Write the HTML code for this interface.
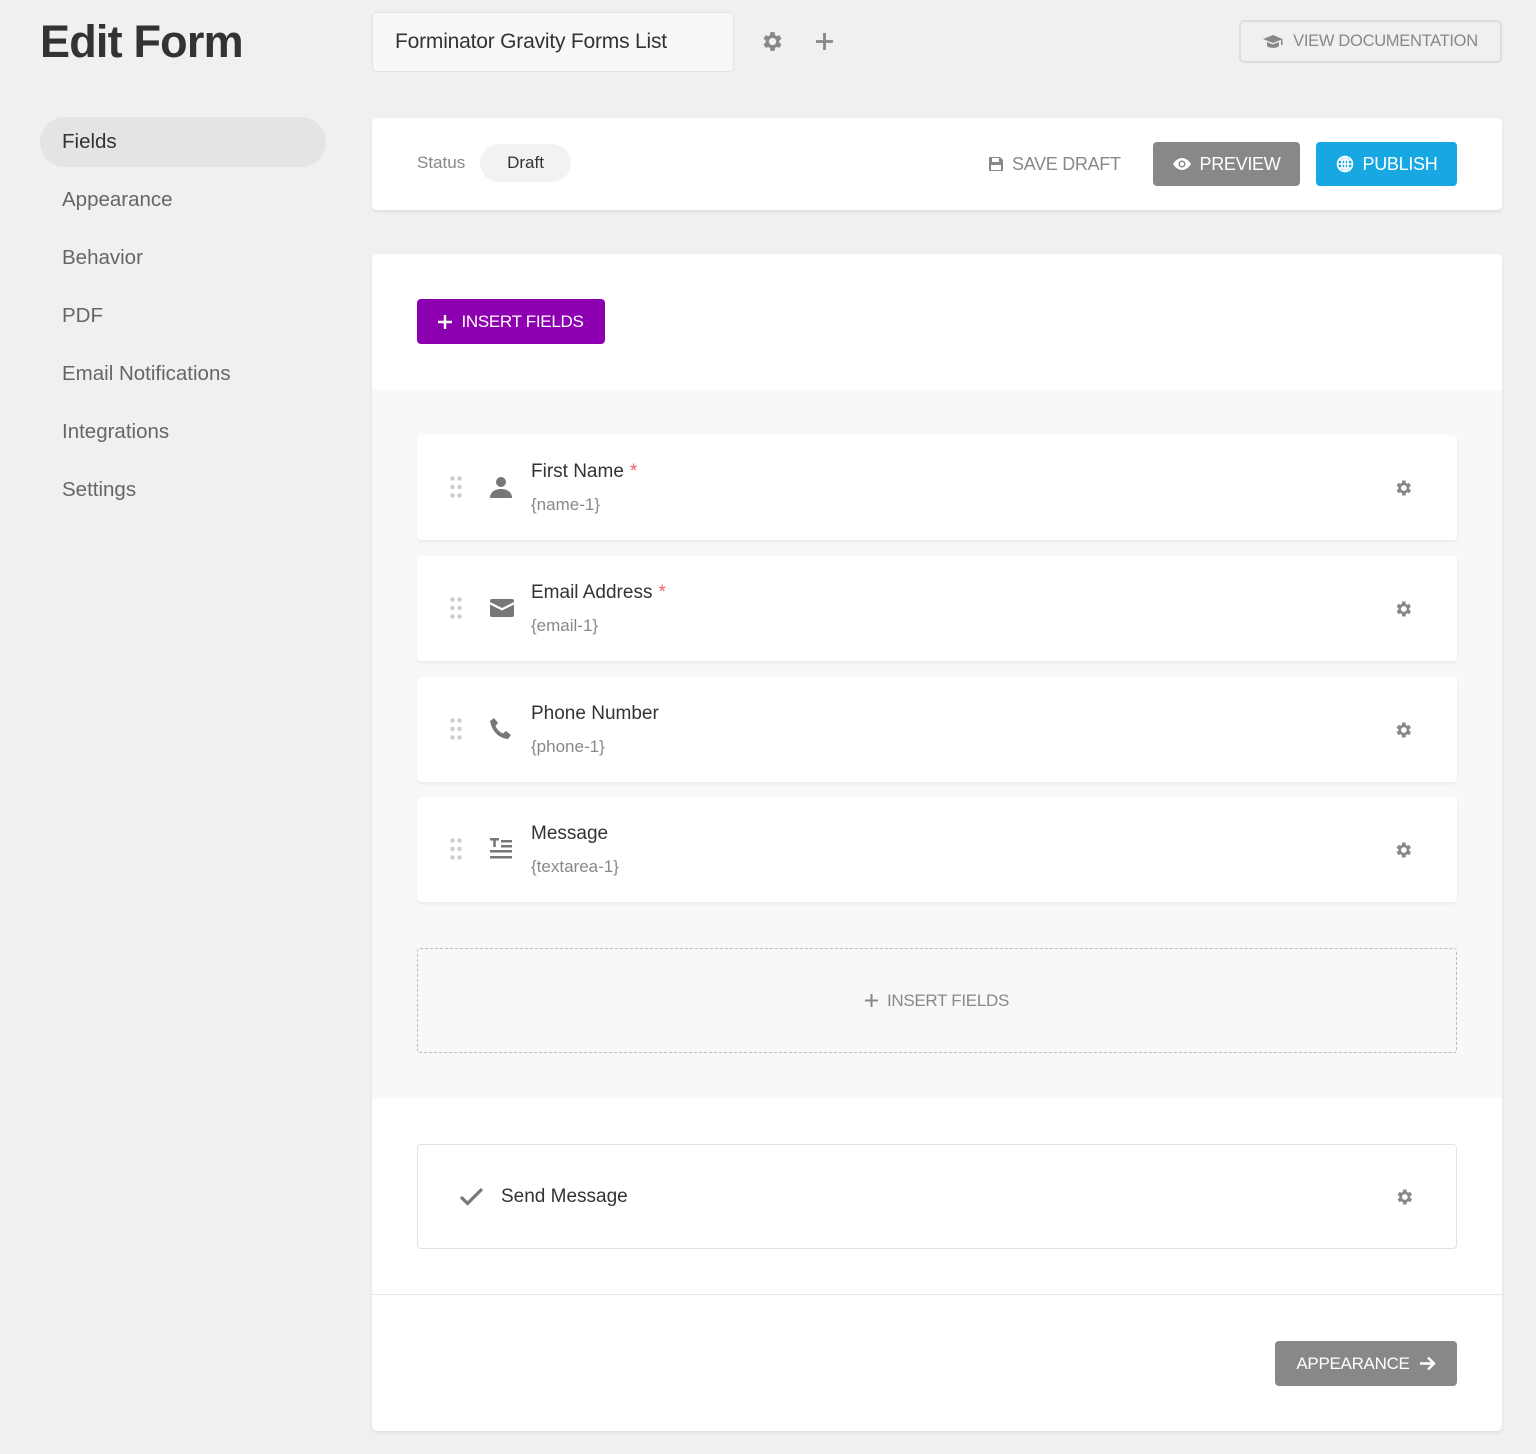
<!DOCTYPE html>
<html><head><meta charset="utf-8"><style>
*{box-sizing:border-box;margin:0;padding:0}
body{width:1536px;height:1454px;background:#f0f0f0;font-family:"Liberation Sans",Arial,sans-serif;position:relative;overflow:hidden;color:#333}
.a{position:absolute}
.h1{left:40px;top:16px;font-size:45px;font-weight:bold;color:#333;letter-spacing:-0.8px}
.title{left:372px;top:12px;width:362px;height:60px;background:#f8f8f8;border:1px solid #e2e2e2;border-radius:5px;font-size:21px;padding:17px 22px;color:#333;letter-spacing:-0.2px}
.doc{left:1239px;top:20px;width:263px;height:43px;border:2px solid #ddd;border-radius:5px;color:#888;font-size:16.5px;display:flex;align-items:center;justify-content:center;gap:10px;letter-spacing:-0.3px}
.nav{left:62px;font-size:20.5px;color:#666}
.pill{left:40px;top:117px;width:286px;height:50px;background:#e4e4e4;border-radius:25px}
.card{background:#fff;border-radius:5px;box-shadow:0 2px 3px rgba(0,0,0,.07)}
.btn{display:flex;align-items:center;justify-content:center;gap:9px;border-radius:4px;color:#fff;font-size:17px;letter-spacing:-0.3px}
.row{left:417px;width:1040px;height:105px;background:#fff;border-radius:4px;box-shadow:0 2px 3px rgba(0,0,0,.06)}
.row .l{position:absolute;left:114px;top:26px;font-size:19px;color:#333}
.row .l b{color:#e66;font-weight:normal;margin-left:6px}
.row .s{position:absolute;left:114px;top:60px;font-size:17px;color:#888}
.row .dr{position:absolute;left:33px;top:41px}
.row .ic{position:absolute;left:72px;top:40px}
.row .g{position:absolute;left:976px;top:43px}
</style></head><body>
<div class="a h1">Edit Form</div>
<div class="a title">Forminator Gravity Forms List</div>
<svg class="a" style="left:759px;top:29px" width="25" height="25" viewBox="0 0 24 24"><path fill="#888" d="M19.4 13a7.6 7.6 0 000-2l2.1-1.6-2-3.5-2.5 1a7.4 7.4 0 00-1.7-1L15 3h-4l-.4 2.9a7.4 7.4 0 00-1.7 1l-2.5-1-2 3.5L6.5 11a7.6 7.6 0 000 2l-2.1 1.6 2 3.5 2.5-1a7.4 7.4 0 001.7 1L11 21h4l.4-2.9a7.4 7.4 0 001.7-1l2.5 1 2-3.5zM13 15.5a3.5 3.5 0 110-7 3.5 3.5 0 010 7z"/></svg>
<svg class="a" style="left:815px;top:32px" width="19" height="19" viewBox="0 0 20 20"><path stroke="#888" stroke-width="3" d="M10 1v18M1 10h18"/></svg>
<div class="a doc"><svg width="20" height="14" viewBox="0 0 20 14"><path fill="#888" d="M10 0L0 4l10 4 8-3.2V10h1.5V4zM4 7v4c2 2.5 10 2.5 12 0V7l-6 2.4z"/></svg>VIEW DOCUMENTATION</div>
<div class="a pill"></div>
<div class="a nav" style="top:130px;color:#333">Fields</div>
<div class="a nav" style="top:188px">Appearance</div>
<div class="a nav" style="top:246px">Behavior</div>
<div class="a nav" style="top:304px">PDF</div>
<div class="a nav" style="top:362px">Email Notifications</div>
<div class="a nav" style="top:420px">Integrations</div>
<div class="a nav" style="top:478px">Settings</div>

<div class="a card" style="left:372px;top:118px;width:1130px;height:92px"></div>
<div class="a" style="left:417px;top:153px;font-size:17px;color:#888">Status</div>
<div class="a" style="left:480px;top:144px;width:91px;height:38px;background:#f2f2f2;border-radius:19px;font-size:17px;text-align:center;line-height:38px;color:#333">Draft</div>
<div class="a btn" style="left:988px;top:142px;height:44px;color:#888;font-size:18px;gap:8px"><svg width="16" height="16" viewBox="0 0 16 16"><path fill="#888" d="M1 1h11l3 3v11H1zM4 2v4h7V2zM3 9v5h10V9z"/></svg>SAVE DRAFT</div>
<div class="a btn" style="left:1153px;top:142px;width:147px;height:44px;background:#888;font-size:18px"><svg width="18" height="12" viewBox="0 0 18 12"><path fill="#fff" d="M9 0C5 0 2 3 0 6c2 3 5 6 9 6s7-3 9-6c-2-3-5-6-9-6zm0 9.5A3.5 3.5 0 119 2.5a3.5 3.5 0 010 7zM9 4a2 2 0 100 4 2 2 0 000-4z"/></svg>PREVIEW</div>
<div class="a btn" style="left:1316px;top:142px;width:141px;height:44px;background:#17a8e3;font-size:18px"><svg width="18" height="18" viewBox="0 0 18 18" fill="none" stroke="#fff" stroke-width="1.6"><circle cx="9" cy="9" r="7.5"/><ellipse cx="9" cy="9" rx="3.2" ry="7.5"/><path d="M1.5 9h15M9 1.5v15M3 5h12M3 13h12"/></svg>PUBLISH</div>

<div class="a card" style="left:372px;top:254px;width:1130px;height:1177px;overflow:hidden">
<div class="a" style="left:0;top:136px;width:1130px;height:708px;background:#f8f8f8"></div>
<div class="a" style="left:0;top:1040px;width:1130px;height:1px;background:#e8e8e8"></div>
</div>
<div class="a btn" style="left:417px;top:299px;width:188px;height:45px;background:#8d00b1;font-size:17px"><svg width="14" height="14" viewBox="0 0 14 14"><path stroke="#fff" stroke-width="2.4" d="M7 0v14M0 7h14"/></svg>INSERT FIELDS</div>

<div class="a row" style="top:435px"><svg class="dr" width="12" height="22"><g fill="#ccc"><circle cx="2.5" cy="2.5" r="2.2"/><circle cx="9.5" cy="2.5" r="2.2"/><circle cx="2.5" cy="11" r="2.2"/><circle cx="9.5" cy="11" r="2.2"/><circle cx="2.5" cy="19.5" r="2.2"/><circle cx="9.5" cy="19.5" r="2.2"/></g></svg>
<svg class="ic" width="24" height="24" viewBox="0 0 24 24"><path fill="#777" d="M12 2a5 5 0 110 10 5 5 0 010-10zM1 23c0-6 5-9 11-9s11 3 11 9z"/></svg>
<div class="l">First Name<b>*</b></div><div class="s">{name-1}</div>
<svg class="g" width="20" height="20" viewBox="0 0 24 24"><path fill="#888" d="M19.4 13a7.6 7.6 0 000-2l2.1-1.6-2-3.5-2.5 1a7.4 7.4 0 00-1.7-1L15 3h-4l-.4 2.9a7.4 7.4 0 00-1.7 1l-2.5-1-2 3.5L6.5 11a7.6 7.6 0 000 2l-2.1 1.6 2 3.5 2.5-1a7.4 7.4 0 001.7 1L11 21h4l.4-2.9a7.4 7.4 0 001.7-1l2.5 1 2-3.5zM13 15.5a3.5 3.5 0 110-7 3.5 3.5 0 010 7z"/></svg></div>

<div class="a row" style="top:556px"><svg class="dr" width="12" height="22"><g fill="#ccc"><circle cx="2.5" cy="2.5" r="2.2"/><circle cx="9.5" cy="2.5" r="2.2"/><circle cx="2.5" cy="11" r="2.2"/><circle cx="9.5" cy="11" r="2.2"/><circle cx="2.5" cy="19.5" r="2.2"/><circle cx="9.5" cy="19.5" r="2.2"/></g></svg>
<svg class="ic" width="26" height="24" viewBox="0 0 26 24"><path fill="#777" d="M1 5a2 2 0 012-2h20a2 2 0 012 2v1L13 12 1 6zM1 8.5l12 6 12-6V19a2 2 0 01-2 2H3a2 2 0 01-2-2z"/></svg>
<div class="l">Email Address<b>*</b></div><div class="s">{email-1}</div>
<svg class="g" width="20" height="20" viewBox="0 0 24 24"><path fill="#888" d="M19.4 13a7.6 7.6 0 000-2l2.1-1.6-2-3.5-2.5 1a7.4 7.4 0 00-1.7-1L15 3h-4l-.4 2.9a7.4 7.4 0 00-1.7 1l-2.5-1-2 3.5L6.5 11a7.6 7.6 0 000 2l-2.1 1.6 2 3.5 2.5-1a7.4 7.4 0 001.7 1L11 21h4l.4-2.9a7.4 7.4 0 001.7-1l2.5 1 2-3.5zM13 15.5a3.5 3.5 0 110-7 3.5 3.5 0 010 7z"/></svg></div>

<div class="a row" style="top:677px"><svg class="dr" width="12" height="22"><g fill="#ccc"><circle cx="2.5" cy="2.5" r="2.2"/><circle cx="9.5" cy="2.5" r="2.2"/><circle cx="2.5" cy="11" r="2.2"/><circle cx="9.5" cy="11" r="2.2"/><circle cx="2.5" cy="19.5" r="2.2"/><circle cx="9.5" cy="19.5" r="2.2"/></g></svg>
<svg class="ic" width="24" height="24" viewBox="0 0 24 24"><path fill="#777" d="M5 1l4 5-2.5 3c1.5 3.5 4 6 7.5 7.5l3-2.5 5 4-3 4C9 21 3 14 1 4z"/></svg>
<div class="l">Phone Number</div><div class="s">{phone-1}</div>
<svg class="g" width="20" height="20" viewBox="0 0 24 24"><path fill="#888" d="M19.4 13a7.6 7.6 0 000-2l2.1-1.6-2-3.5-2.5 1a7.4 7.4 0 00-1.7-1L15 3h-4l-.4 2.9a7.4 7.4 0 00-1.7 1l-2.5-1-2 3.5L6.5 11a7.6 7.6 0 000 2l-2.1 1.6 2 3.5 2.5-1a7.4 7.4 0 001.7 1L11 21h4l.4-2.9a7.4 7.4 0 001.7-1l2.5 1 2-3.5zM13 15.5a3.5 3.5 0 110-7 3.5 3.5 0 010 7z"/></svg></div>

<div class="a row" style="top:797px"><svg class="dr" width="12" height="22"><g fill="#ccc"><circle cx="2.5" cy="2.5" r="2.2"/><circle cx="9.5" cy="2.5" r="2.2"/><circle cx="2.5" cy="11" r="2.2"/><circle cx="9.5" cy="11" r="2.2"/><circle cx="2.5" cy="19.5" r="2.2"/><circle cx="9.5" cy="19.5" r="2.2"/></g></svg>
<svg class="ic" width="24" height="24" viewBox="0 0 24 24"><path fill="#777" d="M1 1h9v2.5H6.8V10H4.2V3.5H1zM12 3h11v2.5H12zM12 8h11v2.5H12zM1 13h22v2.5H1zM1 19h22v2.5H1z"/></svg>
<div class="l">Message</div><div class="s">{textarea-1}</div>
<svg class="g" width="20" height="20" viewBox="0 0 24 24"><path fill="#888" d="M19.4 13a7.6 7.6 0 000-2l2.1-1.6-2-3.5-2.5 1a7.4 7.4 0 00-1.7-1L15 3h-4l-.4 2.9a7.4 7.4 0 00-1.7 1l-2.5-1-2 3.5L6.5 11a7.6 7.6 0 000 2l-2.1 1.6 2 3.5 2.5-1a7.4 7.4 0 001.7 1L11 21h4l.4-2.9a7.4 7.4 0 001.7-1l2.5 1 2-3.5zM13 15.5a3.5 3.5 0 110-7 3.5 3.5 0 010 7z"/></svg></div>

<div class="a btn" style="left:417px;top:948px;width:1040px;height:105px;border:1px dashed #bbb;color:#888;font-size:17px;border-radius:3px"><svg width="13" height="13" viewBox="0 0 14 14"><path stroke="#888" stroke-width="2.2" d="M7 0v14M0 7h14"/></svg>INSERT FIELDS</div>

<div class="a" style="left:417px;top:1144px;width:1040px;height:105px;border:1px solid #e2e2e2;border-radius:4px;background:#fff">
<svg class="a" style="left:41px;top:42px" width="25" height="19" viewBox="0 0 25 19"><path fill="none" stroke="#777" stroke-width="3.2" d="M2 10l6.5 6.5L23 2"/></svg>
<div class="a" style="left:83px;top:41px;font-size:19px;color:#333">Send Message</div>
<svg class="a" style="left:976px;top:42px" width="20" height="20" viewBox="0 0 24 24"><path fill="#888" d="M19.4 13a7.6 7.6 0 000-2l2.1-1.6-2-3.5-2.5 1a7.4 7.4 0 00-1.7-1L15 3h-4l-.4 2.9a7.4 7.4 0 00-1.7 1l-2.5-1-2 3.5L6.5 11a7.6 7.6 0 000 2l-2.1 1.6 2 3.5 2.5-1a7.4 7.4 0 001.7 1L11 21h4l.4-2.9a7.4 7.4 0 001.7-1l2.5 1 2-3.5zM13 15.5a3.5 3.5 0 110-7 3.5 3.5 0 010 7z"/></svg>
</div>

<div class="a btn" style="left:1275px;top:1341px;width:182px;height:45px;background:#888;font-size:17px">APPEARANCE<svg width="17" height="15" viewBox="0 0 17 15"><path fill="none" stroke="#fff" stroke-width="2.4" d="M1 7.5h14M9 1.5l6 6-6 6"/></svg></div>
</body></html>
